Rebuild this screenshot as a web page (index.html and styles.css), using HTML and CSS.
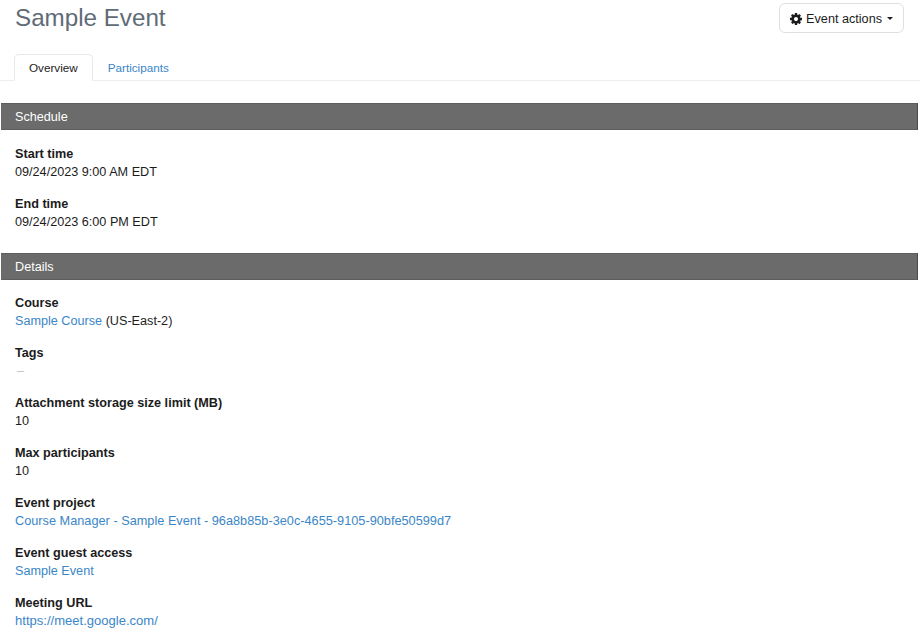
FILE: index.html
```html
<!DOCTYPE html>
<html lang="en">
<head>
    <meta charset="UTF-8">
    <title>Sample Event</title>
    <link rel="stylesheet" href="styles.css">
</head>
<body>
    <header class="page-header">
        <h1 class="title">Sample Event</h1>
        <button class="actions-btn">
            <svg class="gear" viewBox="128 128 1536 1536" width="12" height="12"><path fill-rule="evenodd" d="M1152 896q0-106-75-181t-181-75-181 75-75 181 75 181 181 75 181-75 75-181zm512-109v222q0 12-8 23t-20 13l-185 28q-19 54-39 91 35 50 107 138 10 12 10 25t-9 23q-27 37-99 108t-94 71q-12 0-26-9l-138-108q-44 23-91 38-16 136-29 186-7 28-36 28h-222q-14 0-24.500-8.500t-11.500-21.500l-28-184q-49-16-90-37l-141 107q-10 9-25 9-14 0-25-11-126-114-165-168-7-10-7-23 0-12 8-23 15-21 51-66.500t54-70.500q-27-50-41-99l-183-27q-13-2-21-12.500t-8-23.500v-222q0-12 8-23t19-13l186-28q14-46 39-92-40-57-107-138-10-12-10-24 0-10 9-23 26-36 98.500-107.500t94.500-71.500q13 0 26 10l138 107q44-23 91-38 16-136 29-186 7-28 36-28h222q14 0 24.500 8.500t11.500 21.500l28 184q49 16 90 37l142-107q9-9 24-9 13 0 25 10 129 119 165 170 7 8 7 22 0 12-8 23-15 21-51 66.500t-54 70.500q26 50 41 98l183 28q13 2 21 12.500t8 23.500z"/></svg>
            Event actions
            <span class="caret"></span>
        </button>
    </header>

    <nav class="tabs">
        <a class="tab active">Overview</a>
        <a class="tab">Participants</a>
    </nav>

    <section class="panel schedule">
        <h2 class="panel-heading">Schedule</h2>
        <div class="panel-body">
            <div class="field">
                <div class="label">Start time</div>
                <div class="value">09/24/2023 9:00 AM EDT</div>
            </div>
            <div class="field">
                <div class="label">End time</div>
                <div class="value">09/24/2023 6:00 PM EDT</div>
            </div>
        </div>
    </section>

    <section class="panel">
        <h2 class="panel-heading">Details</h2>
        <div class="panel-body">
            <div class="field">
                <div class="label">Course</div>
                <div class="value"><a class="link">Sample Course</a> (US-East-2)</div>
            </div>
            <div class="field">
                <div class="label">Tags</div>
                <div class="value muted">–</div>
            </div>
            <div class="field">
                <div class="label">Attachment storage size limit (MB)</div>
                <div class="value">10</div>
            </div>
            <div class="field">
                <div class="label">Max participants</div>
                <div class="value">10</div>
            </div>
            <div class="field">
                <div class="label">Event project</div>
                <div class="value"><a class="link project-link">Course Manager - Sample Event - 96a8b85b-3e0c-4655-9105-90bfe50599d7</a></div>
            </div>
            <div class="field">
                <div class="label">Event guest access</div>
                <div class="value"><a class="link">Sample Event</a></div>
            </div>
            <div class="field">
                <div class="label">Meeting URL</div>
                <div class="value"><a class="link url-link">https://meet.google.com/</a></div>
            </div>
        </div>
    </section>
</body>
</html>
```

FILE: styles.css
```css
* {
    margin: 0;
    padding: 0;
    box-sizing: border-box;
    font-family: "Liberation Sans", Arial, sans-serif;
}

html, body {
    height: 630px;
    overflow: hidden;
}

body {
    background: #fff;
    color: #1c1c1c;
    font-size: 12.65px;
    line-height: 18px;
}

.page-header {
    display: flex;
    justify-content: space-between;
    align-items: flex-start;
    height: 54px;
    padding: 3px 16px 0 15px;
}

.title {
    font-size: 24.2px;
    font-weight: 400;
    line-height: 30px;
    color: #5f6b76;
}

.actions-btn {
    display: flex;
    align-items: center;
    gap: 4px;
    height: 30px;
    padding: 1px 10px 0;
    background: #fff;
    border: 1px solid #dfdfdf;
    border-radius: 6px;
    color: #1c1c1c;
    font-size: 12.65px;
}

.gear {
    fill: #1c1c1c;
}

.caret {
    width: 0;
    height: 0;
    margin-left: 1px;
    border-top: 3px solid #1c1c1c;
    border-left: 3px solid transparent;
    border-right: 3px solid transparent;
}

.tabs {
    display: flex;
    height: 27px;
    padding-left: 14px;
    border-bottom: 1px solid #eeeeee;
}

.tab {
    height: 27px;
    padding: 4px 14px 0;
    font-size: 11.7px;
    color: #3a86c8;
    border: 1px solid transparent;
}

.tab.active {
    color: #1c1c1c;
    background: #fff;
    border-color: #e8e8e8 #e8e8e8 #fff;
    border-radius: 5px 5px 0 0;
}

.panel {
    margin: 0 2px 0 1px;
}

.schedule {
    margin-top: 22px;
}

.panel-heading {
    height: 27px;
    padding: 4px 13px 0 14px;
    font-size: 12.65px;
    font-weight: 400;
    line-height: 18px;
    color: #fff;
    background: #6b6b6b;
    border-top: 1px solid #5e5e5e;
    border-bottom: 1px solid #5e5e5e;
    border-right: 1px solid #4a4a4a;
}

.panel-body {
    padding: 14px 14px 22px;
}

.schedule .panel-body {
    padding-top: 15px;
}

.field {
    margin-bottom: 14px;
}

.field:last-child {
    margin-bottom: 0;
}

.label {
    font-weight: 700;
}

.link {
    color: #3a86c8;
}

.project-link {
    font-size: 12.74px;
}

.url-link {
    font-size: 13.05px;
}

.muted {
    padding-left: 2px;
    color: #c4c4c4;
}
```
